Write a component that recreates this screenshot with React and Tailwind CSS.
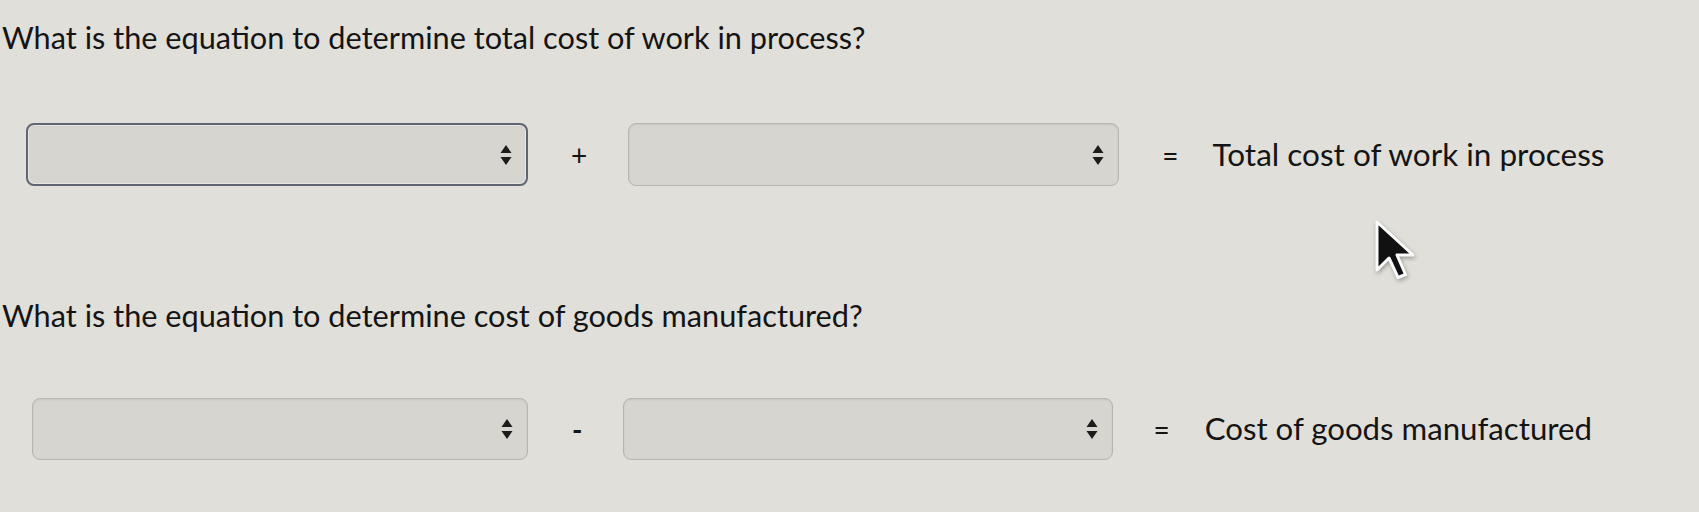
import React from "react";

const font = { fontFamily: "Lato, 'Open Sans', sans-serif" };

function Arrows() {
  return (
    <svg width="12" height="22" viewBox="0 0 12 22" className="shrink-0">
      <path d="M6 1 L11.5 9 L0.5 9 Z" fill="#1c1c1c" />
      <path d="M0.5 13 L11.5 13 L6 21 Z" fill="#1c1c1c" />
    </svg>
  );
}

function SelectBox({ width, focused }) {
  return (
    <div
      className={
        "flex h-full items-center justify-end rounded-[8px] bg-[#d7d5cf] pr-[14px] shadow-[inset_0_1px_2px_rgba(0,0,0,0.08)] " +
        (focused
          ? "border-2 border-[#5f6571] ring-1 ring-inset ring-[#e8e7e3]"
          : "border-[1.5px] border-[#b7b5af]")
      }
      style={{ width }}
    >
      <Arrows />
    </div>
  );
}

function Cursor() {
  return (
    <svg
      width="42"
      height="62"
      viewBox="-2 -2 42 62"
      className="absolute left-[1375px] top-[220px] drop-shadow-[1px_2px_2px_rgba(0,0,0,0.3)]"
    >
      <path
        d="M0 0 L0 48 L12 36 L21 55.5 L28.5 52.5 L20 33 L36 33 Z"
        fill="#111"
        stroke="#fafafa"
        strokeWidth="3"
        strokeLinejoin="round"
      />
    </svg>
  );
}

export default function App() {
  return (
    <div
      className="relative h-[512px] w-[1699px] overflow-hidden bg-[#e1dfd9] text-[#141414]"
      style={font}
    >
      <div className="flex flex-col">
        <h2 className="pt-[20px] pl-[2px] text-[30.7px] leading-[36px] font-normal">
          What is the equation to determine total cost of work in process?
        </h2>

        <div className="mt-[67px] flex h-[63px] items-center pl-[26px]">
          <SelectBox width={502} focused />
          <span className="ml-[43px] text-[28px] leading-none">+</span>
          <div className="ml-[41px] h-full">
            <SelectBox width={491} />
          </div>
          <span className="ml-[43px] text-[28px] leading-none">=</span>
          <span className="ml-[34px] text-[31.5px] leading-none">
            Total cost of work in process
          </span>
        </div>

        <h2 className="mt-[112px] pl-[2px] text-[30.7px] leading-[36px] font-normal">
          What is the equation to determine cost of goods manufactured?
        </h2>

        <div className="mt-[64px] flex h-[62px] items-center pl-[32px]">
          <SelectBox width={496} />
          <span className="ml-[44px] text-[28px] font-bold leading-none">-</span>
          <div className="ml-[41px] h-full">
            <SelectBox width={490} />
          </div>
          <span className="ml-[40px] text-[28px] leading-none">=</span>
          <span className="ml-[35px] text-[31.2px] leading-none">
            Cost of goods manufactured
          </span>
        </div>
      </div>

      <Cursor />
    </div>
  );
}
